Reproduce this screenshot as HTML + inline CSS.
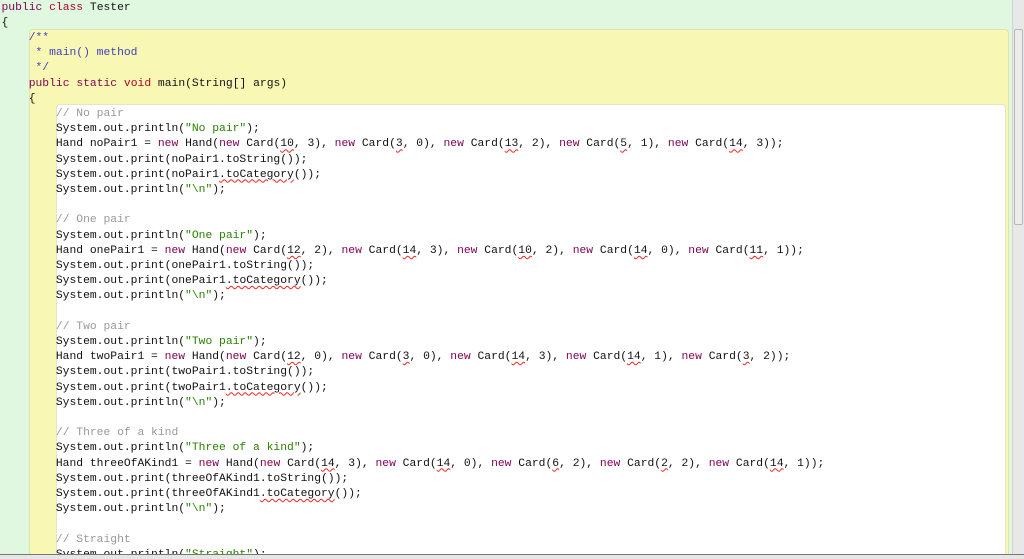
<!DOCTYPE html>
<html><head><meta charset="utf-8">
<style>
*{margin:0;padding:0;box-sizing:border-box}
html,body{width:1024px;height:559px;overflow:hidden;background:#e0f8e0;position:relative}
#g{position:absolute;left:0;top:0;width:1011px;height:555px;background:#e0f8e0}
#y{position:absolute;left:29px;top:29px;width:980px;height:526px;background:#f8f8b4;border:1px solid #e2e2a8;border-bottom:none;border-radius:4px 4px 0 0}
#w{position:absolute;left:56px;top:104px;width:950px;height:451px;background:#fff;border:1px solid #e4e4d0;border-bottom:none;border-radius:4px 4px 0 0}
#sb{position:absolute;left:1012px;top:0;width:12px;height:555px;background:#e8e8e8;border-left:1px solid #d0d0d0}
#th{position:absolute;left:1014px;top:29px;width:9px;height:196px;border:1px solid #b8b8b8;border-radius:2px;background:#ececec}
#bot{position:absolute;left:0;top:554px;width:1024px;height:5px;background:#e6e6e6;border-top:1px solid #777}
#code{position:absolute;left:1.5px;top:0.5px;height:554px;overflow:hidden;font-family:"Liberation Mono",monospace;font-size:11.33px;line-height:15.2px;white-space:pre;color:#111}
.k{color:#7f0055}.v{color:#b0002a}.j{color:#3f3fbf}.c{color:#999}.s{color:#2a8000}
.u{text-decoration:underline wavy #e22;text-decoration-thickness:1px;text-underline-offset:2px}
</style></head><body>
<div id="g"></div><div id="y"></div><div id="w"></div>
<div id="code"><span class="k">public</span> <span class="v">class</span> Tester
{
    <span class="j">/**</span>
    <span class="j"> * main() method</span>
    <span class="j"> */</span>
    <span class="k">public</span> <span class="k">static</span> <span class="v">void</span> main(String[] args)
    {
        <span class="c">// No pair</span>
        System.out.println(<span class="s">"No pair"</span>);
        Hand noPair1 = <span class="k">new</span> Hand(<span class="k">new</span> Card(<span class="u">10</span>, 3), <span class="k">new</span> Card(<span class="u">3</span>, 0), <span class="k">new</span> Card(<span class="u">13</span>, 2), <span class="k">new</span> Card(<span class="u">5</span>, 1), <span class="k">new</span> Card(<span class="u">14</span>, 3));
        System.out.print(noPair1.toString());
        System.out.print(noPair1<span class="u">.toCategory</span>());
        System.out.println(<span class="s">"\n"</span>);

        <span class="c">// One pair</span>
        System.out.println(<span class="s">"One pair"</span>);
        Hand onePair1 = <span class="k">new</span> Hand(<span class="k">new</span> Card(<span class="u">12</span>, 2), <span class="k">new</span> Card(<span class="u">14</span>, 3), <span class="k">new</span> Card(<span class="u">10</span>, 2), <span class="k">new</span> Card(<span class="u">14</span>, 0), <span class="k">new</span> Card(<span class="u">11</span>, 1));
        System.out.print(onePair1.toString());
        System.out.print(onePair1<span class="u">.toCategory</span>());
        System.out.println(<span class="s">"\n"</span>);

        <span class="c">// Two pair</span>
        System.out.println(<span class="s">"Two pair"</span>);
        Hand twoPair1 = <span class="k">new</span> Hand(<span class="k">new</span> Card(<span class="u">12</span>, 0), <span class="k">new</span> Card(<span class="u">3</span>, 0), <span class="k">new</span> Card(<span class="u">14</span>, 3), <span class="k">new</span> Card(<span class="u">14</span>, 1), <span class="k">new</span> Card(<span class="u">3</span>, 2));
        System.out.print(twoPair1.toString());
        System.out.print(twoPair1<span class="u">.toCategory</span>());
        System.out.println(<span class="s">"\n"</span>);

        <span class="c">// Three of a kind</span>
        System.out.println(<span class="s">"Three of a kind"</span>);
        Hand threeOfAKind1 = <span class="k">new</span> Hand(<span class="k">new</span> Card(<span class="u">14</span>, 3), <span class="k">new</span> Card(<span class="u">14</span>, 0), <span class="k">new</span> Card(<span class="u">6</span>, 2), <span class="k">new</span> Card(<span class="u">2</span>, 2), <span class="k">new</span> Card(<span class="u">14</span>, 1));
        System.out.print(threeOfAKind1.toString());
        System.out.print(threeOfAKind1<span class="u">.toCategory</span>());
        System.out.println(<span class="s">"\n"</span>);

        <span class="c">// Straight</span>
        System.out.println(<span class="s">"Straight"</span>);
</div>
<div id="sb"></div><div id="th"></div>
<div id="bot"></div>
</body></html>
